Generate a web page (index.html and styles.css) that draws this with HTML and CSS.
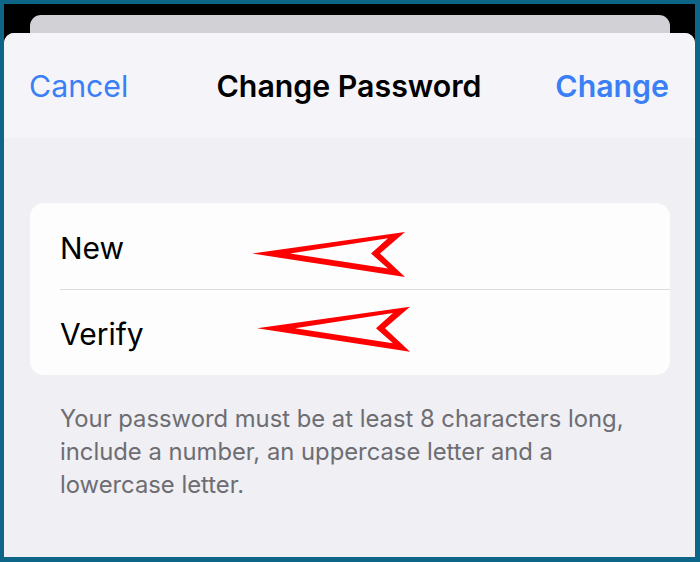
FILE: index.html
```html
<!DOCTYPE html>
<html lang="en">
<head>
<meta charset="utf-8">
<title>Change Password</title>
<link rel="stylesheet" href="styles.css">
</head>
<body>
<div class="frame">
  <div class="backsheet"></div>
  <div class="sheet">
    <header class="navbar">
      <span class="nav-btn nav-cancel">Cancel</span>
      <span class="nav-title">Change Password</span>
      <span class="nav-btn nav-done">Change</span>
    </header>
    <div class="content">
      <div class="card">
        <div class="row row-first">New</div>
        <div class="sep"></div>
        <div class="row">Verify</div>
      </div>
      <p class="footnote">Your password must be at least 8 characters long, include a number, an uppercase letter and a lowercase letter.</p>
    </div>
  </div>
  <svg class="arrows" width="700" height="562" viewBox="0 0 700 562" aria-hidden="true">
    <path d="M252 253.5 L405 232 L380 253.5 L405 277 Z M290 253.5 L388 238.3 L371 253.5 L388 268.5 Z" fill="#ff0000" fill-rule="evenodd"/>
    <path transform="translate(5 74.8)" d="M252 253.5 L405 232 L380 253.5 L405 277 Z M290 253.5 L388 238.3 L371 253.5 L388 268.5 Z" fill="#ff0000" fill-rule="evenodd"/>
  </svg>
</div>
</body>
</html>
```
FILE: styles.css
```css
* { box-sizing: border-box; }
html, body { margin: 0; padding: 0; }
body {
  width: 700px;
  height: 562px;
  font-family: Inter, "Liberation Sans", sans-serif;
  -webkit-font-smoothing: antialiased;
}
.frame {
  position: relative;
  width: 700px;
  height: 562px;
  border-style: solid;
  border-color: #0d6687;
  border-width: 4px 5px 5px 4px;
  background: #000;
  display: flex;
  flex-direction: column;
  overflow: hidden;
}
.backsheet {
  height: 18px;
  margin: 11px 25px 0 26px;
  background: #d1d1d6;
  border-radius: 11px 11px 0 0;
  flex: none;
}
.sheet {
  flex: 1;
  background: #efeff4;
  border-radius: 10px 10px 0 0;
  display: flex;
  flex-direction: column;
  overflow: hidden;
}
.navbar {
  height: 105px;
  flex: none;
  background: #f5f5f9;
  display: grid;
  grid-template-columns: 1fr auto 1fr;
  align-items: center;
  padding: 0 26px 0 25px;
  font-size: 30.3px;
}
.nav-btn { color: #3a7ff6; }
.nav-cancel { justify-self: start; }
.nav-done { justify-self: end; font-weight: 600; }
.nav-title { color: #000; font-weight: 600; }
.content {
  padding: 65px 25px 0 26px;
}
.card {
  background: #fdfdfe;
  border-radius: 14px;
  overflow: hidden;
}
.row {
  height: 85px;
  display: flex;
  align-items: center;
  padding: 3px 0 0 30px;
  font-size: 30px;
  color: #000;
}
.row-first { height: 86px; }
.sep {
  height: 1px;
  margin-left: 30px;
  background: #dcdcdf;
}
.footnote {
  margin: 27px 0 0 30px;
  max-width: 600px;
  font-size: 23.8px;
  line-height: 33px;
  color: #6d6d72;
}
.arrows {
  position: absolute;
  left: -4px;
  top: -4px;
  pointer-events: none;
}
```
